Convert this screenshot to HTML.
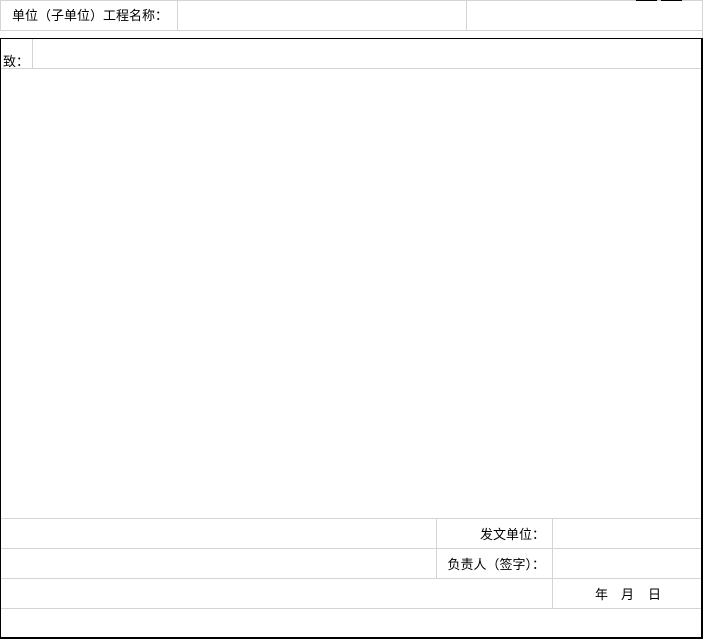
<!DOCTYPE html>
<html><head><meta charset="utf-8"><style>
body{margin:0;width:703px;height:639px;position:relative;background:#fff;overflow:hidden;font-family:"Liberation Sans","WenQuanYi Zen Hei","Noto Sans CJK SC",sans-serif;font-size:13px;color:#000}
div{position:absolute}
.h{height:1px;background:#d4d4d4}
.v{width:1px;background:#d4d4d4}
.t{white-space:nowrap;line-height:15px}
</style></head><body>
<div class="h" style="left:0;top:0;width:703px"></div>
<div class="h" style="left:0;top:30px;width:703px"></div>
<div class="v" style="left:0;top:0;height:30px"></div>
<div class="v" style="left:177px;top:0;height:30px"></div>
<div class="v" style="left:466px;top:0;height:30px"></div>
<div class="v" style="left:702px;top:0;height:38px"></div>
<div style="left:636px;top:0;width:21px;height:1px;background:#000"></div>
<div style="left:661px;top:0;width:21px;height:1px;background:#000"></div>
<div class="t" style="left:12px;top:8px">单位（子单位）工程名称：</div>

<div style="left:0;top:38px;width:700px;height:598px;border-left:1px solid #000;border-top:1px solid #000;border-right:2px solid #000;border-bottom:2px solid #000"></div>
<div class="v" style="left:32px;top:39px;height:29px"></div>
<div class="h" style="left:1px;top:68px;width:700px"></div>
<div class="t" style="left:3px;top:54px">致：</div>

<div class="h" style="left:1px;top:518px;width:700px"></div>
<div class="h" style="left:1px;top:548px;width:700px"></div>
<div class="h" style="left:1px;top:578px;width:700px"></div>
<div class="h" style="left:1px;top:608px;width:700px"></div>
<div class="v" style="left:436px;top:518px;height:60px"></div>
<div class="v" style="left:552px;top:518px;height:90px"></div>
<div class="t" style="right:158px;top:527px">发文单位：</div>
<div class="t" style="right:158px;top:557px">负责人（签字）：</div>
<div class="t" style="left:595px;top:587px">年</div>
<div class="t" style="left:621px;top:587px">月</div>
<div class="t" style="left:648px;top:587px">日</div>
</body></html>
